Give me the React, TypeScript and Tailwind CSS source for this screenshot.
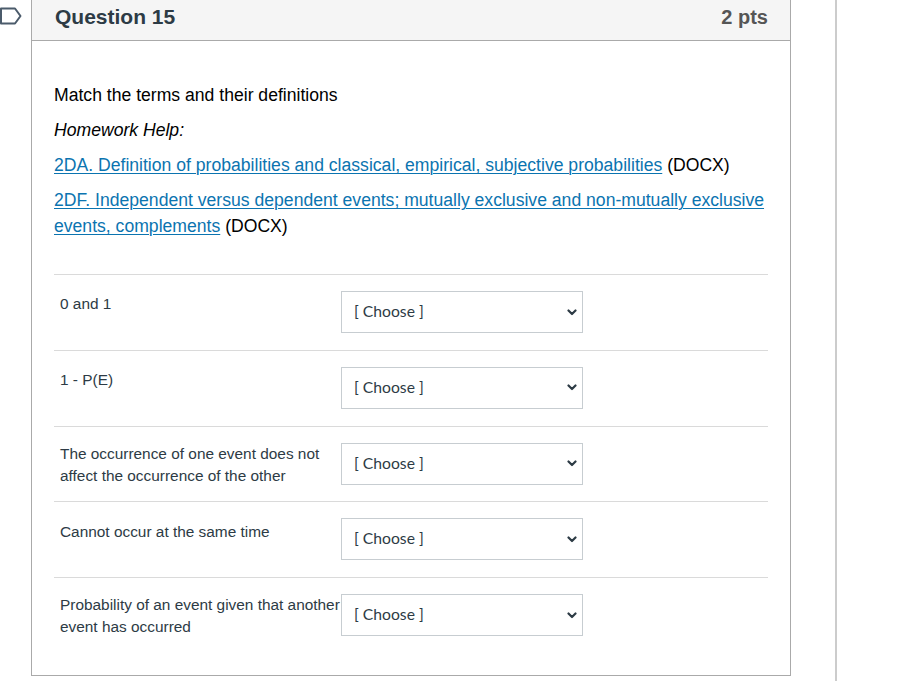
import * as React from "react";

const rows: { term: string; pad: string }[] = [
  { term: "0 and 1", pad: "pt-[2px]" },
  { term: "1 - P(E)", pad: "pt-[2px]" },
  { term: "The occurrence of one event does not affect the occurrence of the other", pad: "pt-0" },
  { term: "Cannot occur at the same time", pad: "pt-[3px]" },
  { term: "Probability of an event given that another event has occurred", pad: "pt-0" },
];

function Chevron() {
  return (
    <svg width="10" height="7" viewBox="0 0 10 7" className="shrink-0">
      <path d="M1.5 1.5 L5 5 L8.5 1.5" fill="none" stroke="#2d3b45" strokeWidth="2.2" strokeLinecap="round" strokeLinejoin="round" />
    </svg>
  );
}

function ChooseSelect() {
  return (
    <div className="flex h-[42px] w-[242px] shrink-0 items-center justify-between border border-[#c7cdd1] bg-white pl-[12px] pr-[5px]">
      <span className="pb-[2px] text-[15.7px] text-[#2d3b45]" style={{ fontFamily: "Lato, 'Liberation Sans', sans-serif" }}>
        [ Choose ]
      </span>
      <Chevron />
    </div>
  );
}

function MatchRow({ term, pad }: { term: string; pad: string }) {
  return (
    <div className="flex h-[75.75px] items-start border-t border-[#dadada] pt-[16px]">
      <div className={`w-[287px] shrink-0 pl-[6px] text-[15.4px] leading-[22px] text-[#2d3b45] ${pad}`}>{term}</div>
      <ChooseSelect />
    </div>
  );
}

export default function App() {
  const link = "text-[#0b74b0] underline underline-offset-2 decoration-1";
  return (
    <div className="flex h-[681px] w-[922px] overflow-hidden bg-white" style={{ fontFamily: "'Liberation Sans', Arial, sans-serif" }}>
      <div className="w-[31px] shrink-0 pt-[7px]">
        <svg width="22" height="18" viewBox="0 0 22 18">
          <path d="M1 1.5 H15 L20.5 9 L15 16.5 H1 Z" fill="none" stroke="#4b5b6b" strokeWidth="2" strokeLinejoin="round" />
        </svg>
      </div>

      <div className="flex h-[676px] w-[760px] shrink-0 flex-col border-x border-b border-[#aaaaaa]">
        <div className="flex h-[41px] items-center justify-between border-b border-[#aaaaaa] bg-[#f5f5f5] pb-[6px] pl-[23px] pr-[22px]">
          <span className="text-[21px] font-bold text-[#2d3b45]">Question 15</span>
          <span className="text-[20px] font-bold text-[#555555]">2 pts</span>
        </div>

        <div className="px-[22px] pt-[41px] text-[17.6px] leading-[26px] text-[#000000]">
          <p className="mb-[9px]">Match the terms and their definitions</p>
          <p className="mb-[9px] italic">Homework Help:</p>
          <p className="mb-[9px]">
            <span className={link}>2DA. Definition of probabilities and classical, empirical, subjective probabilities</span> (DOCX)
          </p>
          <p>
            <span className={link}>2DF. Independent versus dependent events; mutually exclusive and non-mutually exclusive events, complements</span> (DOCX)
          </p>

          <div className="mt-[35px]">
            {rows.map((r) => (
              <MatchRow key={r.term} term={r.term} pad={r.pad} />
            ))}
          </div>
        </div>
      </div>

      <div className="ml-[44px] h-full w-[2px] shrink-0 bg-[#cccccc]" />
    </div>
  );
}
